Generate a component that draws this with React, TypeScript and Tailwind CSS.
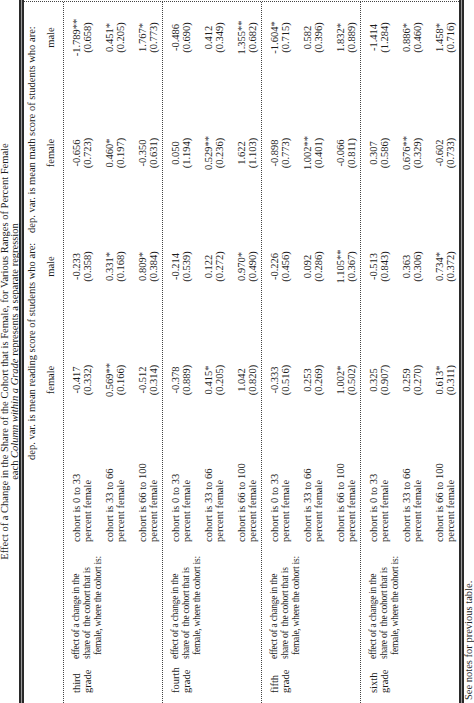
import React from 'react'

type Entry = { range: string; v: [string, string][] }
type Grade = { name: string; rows: Entry[] }

const GRADES: Grade[] = [
  {
    name: 'third',
    rows: [
      { range: 'cohort is 0 to 33', v: [['-0.417', '(0.332)'], ['-0.233', '(0.358)'], ['-0.656', '(0.723)'], ['-1.789**', '(0.658)']] },
      { range: 'cohort is 33 to 66', v: [['0.569**', '(0.166)'], ['0.331*', '(0.168)'], ['0.460*', '(0.197)'], ['0.451*', '(0.205)']] },
      { range: 'cohort is 66 to 100', v: [['-0.512', '(0.314)'], ['0.809*', '(0.384)'], ['-0.350', '(0.631)'], ['1.767*', '(0.773)']] },
    ],
  },
  {
    name: 'fourth',
    rows: [
      { range: 'cohort is 0 to 33', v: [['-0.378', '(0.889)'], ['-0.214', '(0.539)'], ['0.050', '(1.194)'], ['-0.486', '(0.690)']] },
      { range: 'cohort is 33 to 66', v: [['0.415*', '(0.205)'], ['0.122', '(0.272)'], ['0.529**', '(0.236)'], ['0.412', '(0.349)']] },
      { range: 'cohort is 66 to 100', v: [['1.042', '(0.820)'], ['0.970*', '(0.490)'], ['1.622', '(1.103)'], ['1.355**', '(0.682)']] },
    ],
  },
  {
    name: 'fifth',
    rows: [
      { range: 'cohort is 0 to 33', v: [['-0.333', '(0.516)'], ['-0.226', '(0.456)'], ['-0.898', '(0.773)'], ['-1.604*', '(0.715)']] },
      { range: 'cohort is 33 to 66', v: [['0.253', '(0.269)'], ['0.092', '(0.286)'], ['1.002**', '(0.401)'], ['0.582', '(0.396)']] },
      { range: 'cohort is 66 to 100', v: [['1.002*', '(0.502)'], ['1.105**', '(0.367)'], ['-0.066', '(0.811)'], ['1.832*', '(0.889)']] },
    ],
  },
  {
    name: 'sixth',
    rows: [
      { range: 'cohort is 0 to 33', v: [['0.325', '(0.907)'], ['-0.513', '(0.843)'], ['0.307', '(0.586)'], ['-1.414', '(1.284)']] },
      { range: 'cohort is 33 to 66', v: [['0.259', '(0.270)'], ['0.363', '(0.306)'], ['0.676**', '(0.329)'], ['0.886*', '(0.460)']] },
      { range: 'cohort is 66 to 100', v: [['0.613*', '(0.311)'], ['0.734*', '(0.372)'], ['-0.602', '(0.733)'], ['1.458*', '(0.716)']] },
    ],
  },
]

// table is laid out landscape, then turned a quarter to match the scanned page
const COLS = 'grid grid-cols-[44px_117px_82px_160px_67px_160px_71px]'

function GradeBlock({ g }: { g: Grade }) {
  return (
    <div className="border-t border-dotted border-[#444] pt-[7px] pb-[3px]">
      <div className={COLS}>
        <div className="pl-[10px]">
          <div>{g.name}</div>
          <div>grade</div>
        </div>
        <div className="whitespace-nowrap text-[9.5px] tracking-[-0.25px]">
          <div>effect of a change in the</div>
          <div>share of&nbsp; the cohort that is</div>
          <div className="ml-[4px]">female, where the cohort is:</div>
        </div>
        <div className="flex flex-col gap-[11px] whitespace-nowrap">
          {g.rows.map(r => (
            <div key={r.range}>
              <div>{r.range}</div>
              <div>percent female</div>
            </div>
          ))}
        </div>
        {[0, 1, 2, 3].map(c => (
          <div key={c} className="flex flex-col items-center gap-[11px]">
            {g.rows.map(r => (
              <div key={r.range} className="text-center whitespace-nowrap">
                <div>{r.v[c][0]}</div>
                <div>{r.v[c][1]}</div>
              </div>
            ))}
          </div>
        ))}
      </div>
    </div>
  )
}

export default function App() {
  return (
    <div className="relative w-[474px] h-[703px] overflow-hidden bg-white">
      <div className="absolute left-0 top-0 w-[703px] h-[474px] origin-top-left -rotate-90 translate-y-[703px] font-['Liberation_Serif',serif] text-[10.5px] leading-[11px] text-[#1c1c1c]">
        <div className="h-[10px] leading-[10px] text-center whitespace-nowrap">
          Effect of a Change in the Share of the Cohort that is Female, for Various Ranges of Percent Female
        </div>
        <div className="h-[9px] leading-[9px] text-center whitespace-nowrap">
          <span className="underline underline-offset-[1px]">
            each <i>Column within a Grade</i> represents a separate regression
          </span>
        </div>
        <div className="h-[5px] border-y-2 border-[#2a2a2a] bg-[#9a9a9a]" />

        <div className="w-[702px] border-r border-dotted border-[#444]">
          <div className="pt-[2px] pb-[7px]">
            <div className="flex whitespace-nowrap">
              <div className="w-[243px]" />
              <div className="w-[227px]">dep. var. is mean reading score of students who are:</div>
              <div className="w-[231px]">dep. var. is mean math score of students who are:</div>
            </div>
            <div className={`${COLS} mt-[8px]`}>
              <div />
              <div />
              <div />
              <div className="text-center">female</div>
              <div className="text-center">male</div>
              <div className="text-center">female</div>
              <div className="text-center">male</div>
            </div>
          </div>
          {GRADES.map(g => (
            <GradeBlock key={g.name} g={g} />
          ))}
        </div>

        <div className="h-[5px] border-y-2 border-[#2a2a2a] bg-[#9a9a9a]" />
        <div className="pl-[3px] leading-[10px] whitespace-nowrap">See notes for previous table.</div>
      </div>
    </div>
  )
}
